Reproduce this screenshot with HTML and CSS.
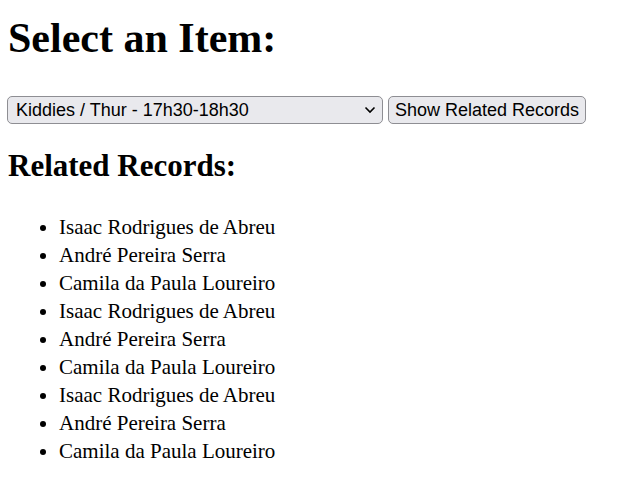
FILE: index.html
```html
<!DOCTYPE html>
<html lang="en">
<head>
    <meta charset="UTF-8">
    <meta name="viewport" content="width=device-width, initial-scale=1.0">
    <title>Select an Item</title>
    <link rel="stylesheet" href="styles.css">
</head>
<body>
    <h1>Select an Item:</h1>
    <div class="controls">
        <select id="item" class="item-select">
            <option>Kiddies / Thur - 17h30-18h30</option>
        </select>
        <button class="show-btn">Show Related Records</button>
    </div>
    <h2>Related Records:</h2>
    <ul class="records">
        <li>Isaac Rodrigues de Abreu</li>
        <li>André Pereira Serra</li>
        <li>Camila da Paula Loureiro</li>
        <li>Isaac Rodrigues de Abreu</li>
        <li>André Pereira Serra</li>
        <li>Camila da Paula Loureiro</li>
        <li>Isaac Rodrigues de Abreu</li>
        <li>André Pereira Serra</li>
        <li>Camila da Paula Loureiro</li>
    </ul>
</body>
</html>
```

FILE: styles.css
```css
body {
    font-family: "Liberation Serif", "Times New Roman", serif;
    margin: 0;
    padding: 8px;
    color: #000;
    background: #fff;
}
h1 {
    font-size: 42px;
    line-height: 48px;
    margin: 6px 0 34px;
}
.controls {
    display: flex;
    gap: 5px;
    align-items: center;
}
.item-select, .show-btn {
    font-family: "Liberation Sans", Arial, sans-serif;
    font-size: 18px;
    height: 28px;
    border: 1px solid #8e8e93;
    border-radius: 5px;
    background: #e9e9ed;
    color: #000;
}
.item-select {
    width: 376px;
    margin-left: -1px;
    padding: 0 8px;
    appearance: none;
    background-image: url("data:image/svg+xml,%3Csvg xmlns='http://www.w3.org/2000/svg' width='12' height='8'%3E%3Cpath d='M1.5 1.5l4.5 4.5 4.5-4.5' fill='none' stroke='%23000' stroke-width='1.6'/%3E%3C/svg%3E");
    background-repeat: no-repeat;
    background-position: right 6px center;
}
.show-btn {
    width: 198px;
    padding: 0;
    white-space: nowrap;
    text-align: center;
}
h2 {
    font-size: 31px;
    line-height: 36px;
    margin: 24px 0 29px;
}
.records {
    font-size: 21px;
    line-height: 28px;
    margin: 0;
    padding-left: 51px;
}
```
